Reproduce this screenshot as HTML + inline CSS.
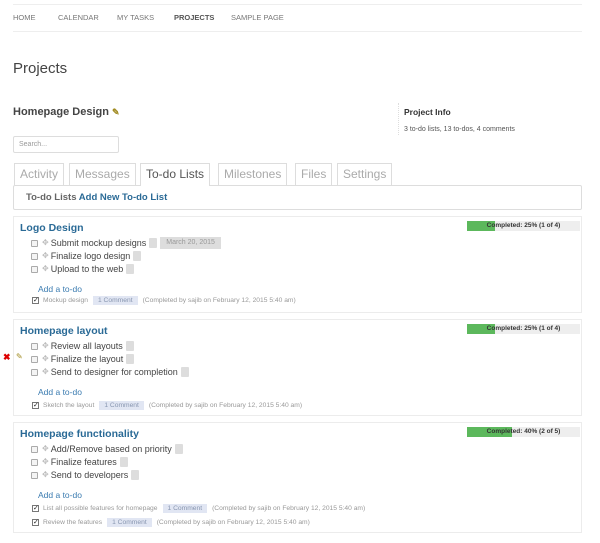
<!DOCTYPE html>
<html><head><meta charset="utf-8"><style>
*{margin:0;padding:0;box-sizing:border-box}
body{width:600px;height:543px;background:#fff;font-family:"Liberation Sans",sans-serif;color:#555;position:relative;overflow:hidden}
.a{position:absolute;white-space:nowrap}
.nav{font-size:7.5px;color:#777;top:13px}
.box{position:absolute;left:13px;width:569px;border:1px solid #ececec}
.t{position:absolute;left:6px;font-size:10.5px;font-weight:bold;color:#2a6a96}
.it{position:absolute;left:17px;font-size:9px;color:#444;height:10px;line-height:10px;display:flex;align-items:center}
.cb{width:7px;height:7px;border:1px solid #aaa;border-radius:1px;background:#f4f4f4;margin-right:4px}
.mv{color:#bbb;font-size:8px;margin-right:2px}
.g{display:inline-block;width:8px;height:10px;background:#ddd;border-radius:1px;margin-left:3px}
.add{position:absolute;left:24px;font-size:8.5px;color:#3a7bb0}
.cp{position:absolute;left:18px;font-size:6.7px;color:#999;display:flex;align-items:center;height:9px}
.cc{width:7px;height:7px;border:1px solid #777;margin-right:4px;font-size:7px;line-height:5px;color:#222;text-align:center}
.cm{background:#e1e6f3;color:#8896b0;padding:1px 5px;margin:0 5px}
.pb{position:absolute;left:453px;top:4px;width:113px;height:10px;background:#eee;font-size:6.5px;font-weight:bold;color:#333;line-height:10px;text-align:center}
.pb i{position:absolute;left:0;top:0;height:10px;background:#5cb85c}
.pb span{position:relative}
.tab{position:absolute;top:163px;height:22px;border:1px solid #ddd;border-bottom:none;font-size:12px;color:#aaa;line-height:21px;padding:0 5px;background:#fff}
</style></head><body>
<div class="a" style="left:13px;top:4px;width:569px;border-top:1px solid #eee"></div>
<div class="a" style="left:13px;top:31px;width:569px;border-top:1px solid #eee"></div>
<div class="a nav" style="left:13px">HOME</div>
<div class="a nav" style="left:58px">CALENDAR</div>
<div class="a nav" style="left:117px">MY TASKS</div>
<div class="a nav" style="left:174px;font-weight:bold;color:#555">PROJECTS</div>
<div class="a nav" style="left:231px">SAMPLE PAGE</div>
<div class="a" style="left:13px;top:60px;font-size:15px;color:#444">Projects</div>
<div class="a" style="left:13px;top:106px;font-size:11px;font-weight:bold;color:#444">Homepage Design <span style="color:#a08a20;font-size:9px">✎</span></div>
<div class="a" style="left:398px;top:103px;height:32px;border-left:1px dotted #ddd"></div>
<div class="a" style="left:404px;top:107px;font-size:8.5px;font-weight:bold;color:#333">Project Info</div>
<div class="a" style="left:404px;top:126px;font-size:7px;color:#555">3 to-do lists, 13 to-dos, 4 comments</div>
<div class="a" style="left:13px;top:136px;width:106px;height:17px;border:1px solid #ddd;border-radius:2px;font-size:7px;color:#999;padding:4px 5px">Search...</div>
<div class="tab" style="left:14px">Activity</div>
<div class="tab" style="left:69px">Messages</div>
<div class="tab" style="left:140px;color:#555;height:23px;z-index:2">To-do Lists</div>
<div class="tab" style="left:218px">Milestones</div>
<div class="tab" style="left:295px">Files</div>
<div class="tab" style="left:337px">Settings</div>
<div class="a" style="left:13px;top:185px;width:569px;height:25px;border:1px solid #ddd;border-radius:2px;font-size:9.5px;font-weight:bold;color:#666;padding:6px 12px">To-do Lists <span style="color:#2a6a96">Add New To-do List</span></div>

<div class="box" style="top:216px;height:97px">
<div class="t" style="top:5px">Logo Design</div>
<div class="pb"><i style="width:28px"></i><span>Completed: 25% (1 of 4)</span></div>
<div class="it" style="top:21px"><span class="cb"></span><span class="mv">✥</span>Submit mockup designs<span class="g"></span><span style="background:#ddd;color:#999;font-size:7px;padding:1px 6px;margin-left:3px">March 20, 2015</span></div>
<div class="it" style="top:34px"><span class="cb"></span><span class="mv">✥</span>Finalize logo design<span class="g"></span></div>
<div class="it" style="top:47px"><span class="cb"></span><span class="mv">✥</span>Upload to the web<span class="g"></span></div>
<div class="add" style="top:67px">Add a to-do</div>
<div class="cp" style="top:79px"><span class="cc">✓</span>Mockup design<span class="cm">1 Comment</span>(Completed by sajib on February 12, 2015 5:40 am)</div>
</div>

<div class="a" style="left:3px;top:352px;font-size:9px;color:#d00;font-weight:bold">✖</div>
<div class="a" style="left:16px;top:352px;font-size:8px;color:#a08a20">✎</div>
<div class="box" style="top:319px;height:97px">
<div class="t" style="top:5px">Homepage layout</div>
<div class="pb"><i style="width:28px"></i><span>Completed: 25% (1 of 4)</span></div>
<div class="it" style="top:21px"><span class="cb"></span><span class="mv">✥</span>Review all layouts<span class="g"></span></div>
<div class="it" style="top:34px"><span class="cb"></span><span class="mv">✥</span>Finalize the layout<span class="g"></span></div>
<div class="it" style="top:47px"><span class="cb"></span><span class="mv">✥</span>Send to designer for completion<span class="g"></span></div>
<div class="add" style="top:67px">Add a to-do</div>
<div class="cp" style="top:81px"><span class="cc">✓</span>Sketch the layout<span class="cm">1 Comment</span>(Completed by sajib on February 12, 2015 5:40 am)</div>
</div>

<div class="box" style="top:422px;height:111px">
<div class="t" style="top:5px">Homepage functionality</div>
<div class="pb"><i style="width:45px"></i><span>Completed: 40% (2 of 5)</span></div>
<div class="it" style="top:21px"><span class="cb"></span><span class="mv">✥</span>Add/Remove based on priority<span class="g"></span></div>
<div class="it" style="top:34px"><span class="cb"></span><span class="mv">✥</span>Finalize features<span class="g"></span></div>
<div class="it" style="top:47px"><span class="cb"></span><span class="mv">✥</span>Send to developers<span class="g"></span></div>
<div class="add" style="top:67px">Add a to-do</div>
<div class="cp" style="top:81px"><span class="cc">✓</span>List all possible features for homepage<span class="cm">1 Comment</span>(Completed by sajib on February 12, 2015 5:40 am)</div>
<div class="cp" style="top:95px"><span class="cc">✓</span>Review the features<span class="cm">1 Comment</span>(Completed by sajib on February 12, 2015 5:40 am)</div>
</div>
</body></html>
